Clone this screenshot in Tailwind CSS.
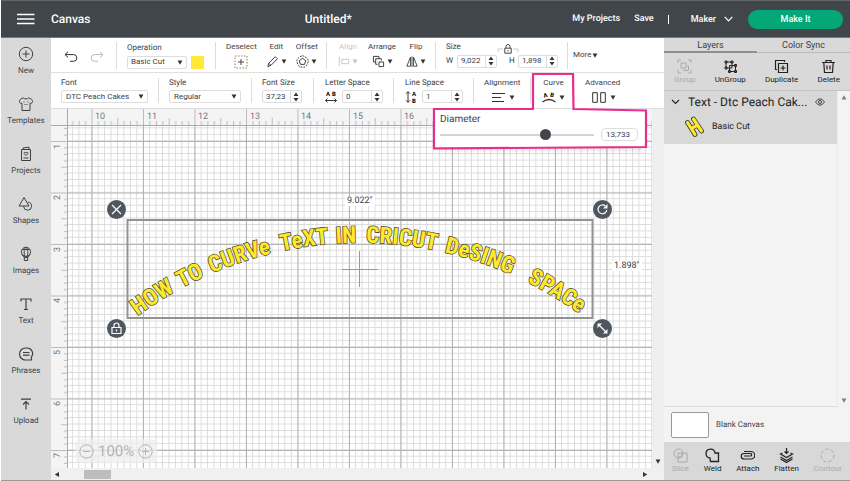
<!DOCTYPE html>
<html lang="en">
<head>
<meta charset="utf-8">
<title>Canvas</title>
<script src="https://cdn.jsdelivr.net/npm/@tailwindcss/browser@4"></script>
</head>
<body class="h-screen overflow-hidden bg-white pl-px text-[8px] leading-[10px] text-[#3c4146] [text-rendering:geometricPrecision] font-[Roboto,'Liberation_Sans',sans-serif]">
<svg class="hidden">
  <symbol id="down" viewBox="0 0 6 5"><path d="M.6.5h4.8L3 4.7z" fill="#333"/></symbol>
  <symbol id="step" viewBox="0 0 6 10"><path d="M.5 4 3 .5 5.500 4zM.5 6 3 9.500 5.500 6z" fill="#333"/></symbol>
</svg>
<div class="flex h-full flex-col border-b border-[#999]">
  <header class="flex h-[38px] shrink-0 items-center border-t border-b border-t-[#666] border-b-[#777] bg-[#41464b] text-[9px] font-medium text-white">
    <div class="flex w-[36%] items-center">
      <button aria-label="Menu" class="ml-4 h-4 w-[18px]"><svg viewBox="0 0 18 16" class="h-4 w-[18px]"><path d="M0 3.500h17.500M0 8h17.500M0 12.500h17.500" stroke="#fff" stroke-width="1.300"/></svg></button>
      <h1 class="ml-4 text-[12px] leading-4">Canvas</h1>
    </div>
    <h2 class="-ml-[2px] text-[12px] leading-4">Untitled*</h2>
    <div class="flex flex-1 items-center justify-end pr-[7px]">
      <a href="#">My Projects</a>
      <a href="#" class="ml-[14px]">Save</a>
      <span class="ml-[14px] h-[9px] w-px bg-white"></span>
      <button class="ml-[22px] flex items-center gap-2">Maker<svg viewBox="0 0 9 6" class="h-[6px] w-[9px]"><path d="M.7.800 4.500 4.800 8.300.8" fill="none" stroke="#fff" stroke-width="1.200"/></svg></button>
      <button class="ml-[15px] h-[19px] w-[95px] rounded-full bg-[#04a777]">Make It</button>
    </div>
  </header>

  <div class="flex min-h-0 flex-1">
    <nav class="flex w-[50px] shrink-0 flex-col bg-[#d9d9d9] pt-2 [&>a]:flex [&>a]:h-[50px] [&>a]:flex-col [&>a]:items-center [&>a]:gap-1 [&_svg]:h-4 [&_svg]:w-4 [&_svg]:fill-none [&_svg]:stroke-[#3c4146]">
      <a href="#"><svg viewBox="0 0 16 16"><circle cx="8" cy="8" r="6.700"/><path d="M8 4.500v7M4.500 8h7"/></svg>New</a>
      <a href="#"><svg viewBox="0 0 16 16"><path d="M5.500 2C6.500 3.300 9.500 3.300 10.500 2c2.500.4 4 1.600 4 3.500 0 1.500-1 2-2.500 1.800V14.500H4V7.300C2.500 7.500 1.500 7 1.500 5.500c0-1.900 1.500-3.100 4-3.500z"/><path d="M6 5.500v1M10 5.500v1M6.500 8.500h3" stroke-dasharray="1 1"/></svg>Templates</a>
      <a href="#"><svg viewBox="0 0 16 16"><path d="M3.500 3.500h9v11h-9zM5 3.500V2l6-.8v2.300M8 9.500 6 7.500c0-1.500 1.600-1.500 2-.5.4-1 2-1 2 .5zM5.500 12h5"/></svg>Projects</a>
      <a href="#"><svg viewBox="0 0 16 16"><path d="M6 1.500 11 10H1z"/><path d="M9.800 6.200a4 4 0 1 1-4.200 4"/></svg>Shapes</a>
      <a href="#"><svg viewBox="0 0 16 16"><circle cx="8" cy="5.800" r="4.600"/><path d="M6.300 11.500h3.400v3H6.300zM3.800 8l2.500 3.500M12.200 8 9.700 11.500M8 1.200C5.500 3.200 5.800 8 7.300 11.300M8 1.200C10.500 3.200 10.200 8 8.700 11.300M4.500 3.500h7"/></svg>Images</a>
      <a href="#"><svg viewBox="0 0 16 16"><path d="M3 5.500V3h10v2.500M8 3v10.500M6 13.500h4" stroke-width="1.200"/></svg>Text</a>
      <a href="#"><svg viewBox="0 0 16 16"><path d="M13.500 14H7.500A5.500 5.500 0 0 1 7.500 2h1.500a5.500 5.500 0 0 1 4.500 8.800zM5 6.500h6.500M5 9.200h6.500" stroke-width="1.200"/></svg>Phrases</a>
      <a href="#"><svg viewBox="0 0 16 16"><path d="M3 3.200h10M8 13.500v-8M5 8.500l3-3 3 3" stroke-width="1.200"/></svg>Upload</a>
    </nav>

    <main class="flex min-w-0 flex-1 flex-col">
      <div class="flex h-[35px] shrink-0 items-center border-b border-[#e0e0e0] [&>section]:flex [&>section]:h-[27px] [&>section]:shrink-0 [&>section]:border-r [&>section]:border-[#dcdcdc]">
        <section class="w-[66px] items-center gap-3 pt-1 pl-[13px]">
          <button aria-label="Undo"><svg viewBox="0 0 14 12" class="h-3 w-[14px]"><path d="M4 .8 1 3.600l3 2.800M1 3.600h8.500a3.300 3.300 0 0 1 0 6.700H6" fill="none" stroke="#333"/></svg></button>
          <button aria-label="Redo"><svg viewBox="0 0 14 12" class="h-3 w-[14px]"><path d="M10 .8l3 2.800-3 2.800M13 3.600H4.500a3.300 3.300 0 0 0 0 6.700H8" fill="none" stroke="#bbb"/></svg></button>
        </section>
        <section class="w-[99px] items-end gap-1 pl-[10px]">
          <div>
            <label for="op" class="block">Operation</label>
            <div class="relative mt-[3px] w-fit"><select id="op" class="block h-[13px] w-[60px] appearance-none rounded-xs border border-[#ddd] pl-[3px]"><option>Basic Cut</option></select><svg class="pointer-events-none absolute top-1 right-1 h-[5px] w-[6px]"><use href="#down"/></svg></div>
          </div>
          <button aria-label="Colour" class="h-[13px] w-[13px] bg-[#ffe836]"></button>
        </section>
        <section class="w-[111px] gap-[13px] pl-[10px] [&>button]:flex [&>button]:flex-col [&>button]:items-center [&>button]:gap-[3px]">
          <button>Deselect<svg viewBox="0 0 14 14" class="h-[14px] w-[14px]"><path d="M1 1h12v12H1z" fill="none" stroke="#a77b42" stroke-dasharray="1.500 1.500"/><path d="M7 4v6M4 7h6" stroke="#444"/></svg></button>
          <button class="-ml-1">Edit<span class="flex items-center gap-[2px]"><svg viewBox="0 0 14 14" class="h-[13px] w-[13px]"><path d="M2 12.500l1-3.800L10 1.800l2.300 2.300L5.500 11zM3 9l2.400 2.200" fill="none" stroke="#333"/></svg><svg class="h-[5px] w-[6px]"><use href="#down"/></svg></span></button>
          <button class="-ml-1">Offset<span class="flex items-center gap-[2px]"><svg viewBox="0 0 14 14" class="h-[13px] w-[13px]"><path d="M7 3.500l3.500 2.600-1.300 4H4.800l-1.300-4z" fill="none" stroke="#333"/><path d="M7 .8C9 1 13 4 13.200 6S11 12.500 9.500 13h-5C3 12.500.8 8 .8 6S5 1 7 .8z" fill="none" stroke="#333" stroke-dasharray="2 1.200"/></svg><svg class="h-[5px] w-[6px]"><use href="#down"/></svg></span></button>
        </section>
        <section class="w-[109px] gap-[10px] pl-[11px] [&>button]:flex [&>button]:flex-col [&>button]:items-center [&>button]:gap-[3px]">
          <button class="opacity-30" disabled>Align<span class="flex items-center gap-[2px]"><svg viewBox="0 0 14 14" class="h-[13px] w-[12px]"><path d="M1.500 1.500v11M4.500 4.500h8v5h-8z" fill="none" stroke="#333"/></svg><svg class="h-[5px] w-[6px]"><use href="#down"/></svg></span></button>
          <button>Arrange<span class="flex items-center gap-[2px]"><svg viewBox="0 0 14 14" class="h-[13px] w-[13px]"><path d="M4 7.500H1.500v-6h6V4M10 6V4H4v6h2M7.500 7.500h5v5h-5z" fill="none" stroke="#333"/></svg><svg class="h-[5px] w-[6px]"><use href="#down"/></svg></span></button>
          <button>Flip<span class="flex items-center gap-[2px]"><svg viewBox="0 0 14 14" class="h-[13px] w-[12px]"><path d="M5.200 2v10.500H1zM8.800 2v10.500H13zM7 1v12.500" fill="none" stroke="#333"/></svg><svg class="h-[5px] w-[6px]"><use href="#down"/></svg></span></button>
        </section>
        <section class="relative w-[132px] flex-col pl-[10px]">
          <span>Size</span>
          <div class="mt-[3px] flex items-center">
            <label for="w" class="w-[11px]">W</label>
            <span class="flex h-[13px] w-[40px] items-center rounded-xs border border-[#ddd] pr-[2px]"><input id="w" value="9,022" class="w-0 flex-1 pl-[3px] outline-none"><span class="mr-[2px] h-full w-px bg-[#ddd]"></span><svg class="h-[10px] w-[6px]"><use href="#step"/></svg></span>
            <label for="h" class="ml-3 w-[9px]">H</label>
            <span class="flex h-[13px] w-[40px] items-center rounded-xs border border-[#ddd] pr-[2px]"><input id="h" value="1,898" class="w-0 flex-1 pl-[3px] outline-none"><span class="mr-[2px] h-full w-px bg-[#ddd]"></span><svg class="h-[10px] w-[6px]"><use href="#step"/></svg></span>
          </div>
          <button aria-label="Lock proportions" class="absolute top-[2px] left-[61px]"><svg viewBox="0 0 22 10" class="h-[10px] w-[22px]"><path d="M1 8V5h5M21 8V5h-5" fill="none" stroke="#ccc"/><path d="M7.800 4.200h6.400v5H7.800zM9 4V2.500a2 2 0 0 1 4 0V4M11 6v1.500" fill="none" stroke="#444"/></svg></button>
        </section>
        <button class="flex items-center gap-px pl-[5px]">More<svg class="h-[5px] w-[6px]"><use href="#down"/></svg></button>
      </div>

      <div class="flex h-[36px] shrink-0 items-center border-b border-[#ddd] [&>section]:h-[25px] [&>section]:shrink-0 [&>section]:border-r [&>section]:border-[#dcdcdc]">
        <section class="w-[108px] pl-[10px]">
          <label for="font" class="block">Font</label>
          <div class="relative mt-[2px] w-fit"><select id="font" class="block h-[13px] w-[87px] appearance-none rounded-xs border border-[#ddd] pl-1"><option>DTC Peach Cakes</option></select><svg class="pointer-events-none absolute top-1 right-1 h-[5px] w-[6px]"><use href="#down"/></svg></div>
        </section>
        <section class="w-[93px] pl-[10px]">
          <label for="style" class="block">Style</label>
          <div class="relative mt-[2px] w-fit"><select id="style" class="block h-[13px] w-[72px] appearance-none rounded-xs border border-[#ddd] pl-1"><option>Regular</option></select><svg class="pointer-events-none absolute top-1 right-1 h-[5px] w-[6px]"><use href="#down"/></svg></div>
        </section>
        <section class="w-[62px] pl-[10px]">
          <label for="fs" class="block">Font Size</label>
          <span class="mt-[2px] flex h-[13px] w-[40px] items-center rounded-xs border border-[#ddd] pr-[2px]"><input id="fs" value="37,23" class="w-0 flex-1 pl-[3px] outline-none"><span class="mr-[2px] h-full w-px bg-[#ddd]"></span><svg class="h-[10px] w-[6px]"><use href="#step"/></svg></span>
        </section>
        <section class="w-[80px] pl-[11px]">
          <label for="ls" class="block">Letter Space</label>
          <div class="mt-[2px] flex items-center gap-[5px]">
            <svg viewBox="0 0 12 12" class="h-3 w-3 shrink-0"><path d="M.5 9.500h11M2.500 7.500l-2 2 2 2M9.500 7.500l2 2-2 2" fill="none" stroke="#333"/><text x="1" y="5" font-size="6" font-weight="700">A</text><text x="7" y="5" font-size="6" font-weight="700">B</text></svg>
            <span class="flex h-[13px] w-[41px] items-center rounded-xs border border-[#ddd] pr-[2px]"><input id="ls" value="0" class="w-0 flex-1 pl-[3px] outline-none"><span class="mr-[2px] h-full w-px bg-[#ddd]"></span><svg class="h-[10px] w-[6px]"><use href="#step"/></svg></span>
          </div>
        </section>
        <section class="w-[80px] pl-[11px]">
          <label for="lns" class="block">Line Space</label>
          <div class="mt-[2px] flex items-center gap-[5px]">
            <svg viewBox="0 0 12 12" class="h-3 w-3 shrink-0"><path d="M3 .7v10.600M1 2.700l2-2 2 2M1 9.300l2 2 2-2" fill="none" stroke="#333"/><text x="7" y="5" font-size="6" font-weight="700">A</text><text x="7" y="11.500" font-size="6" font-weight="700">B</text></svg>
            <span class="flex h-[13px] w-[41px] items-center rounded-xs border border-[#ddd] pr-[2px]"><input id="lns" value="1" class="w-0 flex-1 pl-[3px] outline-none"><span class="mr-[2px] h-full w-px bg-[#ddd]"></span><svg class="h-[10px] w-[6px]"><use href="#step"/></svg></span>
          </div>
        </section>
        <section class="w-[57px] pl-[10px]">
          <button class="flex flex-col gap-1">Alignment<span class="flex items-center gap-1 pl-2"><svg viewBox="0 0 13 11" class="h-[11px] w-[13px]"><path d="M0 1.500h13M0 5.500h9M0 9.500h12" stroke="#333" stroke-width="1.200"/></svg><svg class="h-[5px] w-[6px]"><use href="#down"/></svg></span></button>
        </section>
        <section class="relative w-[43px] pl-[11px]">
          <button class="relative z-20 flex flex-col gap-1">Curve<span class="flex items-center gap-[3px]"><svg viewBox="0 0 14 11" class="h-[11px] w-[14px]"><path d="M.5 10q6.500-5 13 0" fill="none" stroke="#333" stroke-width="1.300"/><text x="1.500" y="5.500" font-size="6" font-weight="700" transform="rotate(-15 3 4)">A</text><text x="8" y="5" font-size="6" font-weight="700" transform="rotate(15 10 4)">B</text></svg><svg class="h-[5px] w-[6px]"><use href="#down"/></svg></span></button>
          <div class="absolute top-[-6px] left-[-99px] z-10 h-[78px] w-[216px]">
            <div class="absolute top-[37px] right-[3px] bottom-[3px] left-[3px] bg-white px-[5px] pt-[3px] shadow-md">
              <label for="dia" class="block text-[10px] leading-4">Diameter</label>
              <div class="flex items-center gap-[7px]">
                <input id="dia" type="range" value="70" class="h-[13px] w-[154px] appearance-none bg-transparent bg-[linear-gradient(#d4d4d4,#d4d4d4)] bg-[length:100%_2px] bg-center bg-no-repeat [&::-webkit-slider-thumb]:h-[11px] [&::-webkit-slider-thumb]:w-[11px] [&::-webkit-slider-thumb]:appearance-none [&::-webkit-slider-thumb]:rounded-full [&::-webkit-slider-thumb]:bg-[#41464b]">
                <input aria-label="Diameter value" value="13,733" class="h-[13px] w-[37px] rounded-sm border border-[#ddd] pl-1">
              </div>
            </div>
            <svg viewBox="0 0 216 78" class="pointer-events-none absolute inset-0 h-full w-full"><path d="M101 2h40l.5 35L214 38.500V75L2 76.500V37h99z" fill="none" stroke="#ec2c8d" stroke-width="2.200"/></svg>
          </div>
        </section>
        <button class="ml-[11px] flex flex-col gap-1">Advanced<span class="flex items-center gap-1 pl-[7px]"><svg viewBox="0 0 14 11" class="h-[11px] w-[14px]"><path d="M.7.700h4.600v9.600H.7zM8.700.700h4.600v9.600H8.700z" fill="none" stroke="#333"/></svg><svg class="h-[5px] w-[6px]"><use href="#down"/></svg></span></button>
      </div>

      <div class="flex min-h-0 flex-1">
        <div class="relative min-w-0 flex-1 overflow-hidden bg-white">
          <svg class="absolute inset-0 h-full w-full">
            <defs>
              <pattern id="minor" x="67" y="125.400" width="6.4375" height="6.4375" patternUnits="userSpaceOnUse" patternTransform="translate(-.6 -3.500)"><path d="M6 0V6.4375M0 6H6.4375" stroke="#dadada" stroke-width=".9"/></pattern>
              <pattern id="major" x="91.500" y="141" width="51.500" height="51.500" patternUnits="userSpaceOnUse"><path d="M.5 0V51.500M0 .5H51.500" stroke="#b4b4b4"/></pattern>
              <pattern id="tickx" x="91.500" y="109" width="51.500" height="16" patternUnits="userSpaceOnUse"><path d="M.5 0V16M26.200 9V16M6.900 12V16M13.400 12V16M19.800 12V16M32.700 12V16M39.100 12V16M45.600 12V16" stroke="#b5b5b5" stroke-width=".9"/></pattern>
              <pattern id="ticky" x="51" y="141" width="16" height="51.500" patternUnits="userSpaceOnUse"><path d="M0 .5H16M10 26.200H16M13 6.900H16M13 13.400H16M13 19.800H16M13 32.700H16M13 39.100H16M13 45.600H16" stroke="#b5b5b5" stroke-width=".9"/></pattern>
              <path id="arc" d="M61 391.300A375 375 0 0 1 659 391.300"/>
            </defs>
            <g transform="translate(-51 -109)">
              <rect x="67" y="125" width="2000" height="2000" fill="url(#minor)"/>
              <rect x="67" y="125" width="2000" height="2000" fill="url(#major)"/>
              <rect x="51" y="109" width="2000" height="16" fill="#f4f4f4"/>
              <rect x="51" y="109" width="16" height="2000" fill="#f4f4f4"/>
              <rect x="67" y="109" width="2000" height="16" fill="url(#tickx)"/>
              <rect x="51" y="125" width="16" height="2000" fill="url(#ticky)"/>
              <path d="M67.500 109V2000M51 125.500H2000" stroke="#aaa"/>
              <g font-size="9" fill="#777">
                <text x="95" y="119">10</text><text x="147" y="119">11</text><text x="198" y="119">12</text><text x="250" y="119">13</text><text x="301" y="119">14</text><text x="353" y="119">15</text><text x="404" y="119">16</text>
                <text transform="translate(60 149)rotate(-90)">1</text><text transform="translate(60 200)rotate(-90)">2</text><text transform="translate(60 252)rotate(-90)">3</text><text transform="translate(60 303)rotate(-90)">4</text><text transform="translate(60 355)rotate(-90)">5</text><text transform="translate(60 406)rotate(-90)">6</text><text transform="translate(60 458)rotate(-90)">7</text>
              </g>
              <path d="M342 269.500h36M359.500 251v36" stroke="#999"/>
              <rect x="127.500" y="220" width="465" height="98" fill="none" stroke="#929492" stroke-width="2"/>
              <g font-family="'Liberation Sans Narrow','Roboto Condensed','Liberation Sans',sans-serif" font-size="23" font-weight="700" fill="#ffe92e" stroke="#4f4a28" stroke-width="1.500" paint-order="stroke">
                <text><textPath href="#arc" startOffset="108">HOW</textPath></text>
                <text><textPath href="#arc" startOffset="160">TO</textPath></text>
                <text><textPath href="#arc" startOffset="194">CURVe</textPath></text>
                <text><textPath href="#arc" startOffset="267">TeXT</textPath></text>
                <text><textPath href="#arc" startOffset="322">IN</textPath></text>
                <text><textPath href="#arc" startOffset="352">CRICUT</textPath></text>
                <text><textPath href="#arc" startOffset="431">DeSING</textPath></text>
                <text><textPath href="#arc" startOffset="519">SPACe</textPath></text>
              </g>
            </g>
          </svg>
          <span class="absolute top-[87px] left-[294px] bg-white px-[2px] text-[9px]">9.022"</span>
          <span class="absolute top-[152px] left-[561px] bg-white px-[2px] text-[9px]">1.898"</span>
          <button aria-label="Delete" class="absolute top-[91px] left-[56px] h-[19px] w-[19px] rounded-full bg-[#4e575f]"><svg viewBox="0 0 19 19"><path d="M5 5l9 9M14 5l-9 9" stroke="#fff" stroke-width="1.200"/></svg></button>
          <button aria-label="Rotate" class="absolute top-[91px] left-[542px] h-[19px] w-[19px] rounded-full bg-[#4e575f]"><svg viewBox="0 0 19 19"><path d="M13.800 10a4.400 4.400 0 1 1-1.500-4" fill="none" stroke="#fff" stroke-width="1.200"/><path d="M14.500 4v4.500H10z" fill="#fff"/></svg></button>
          <button aria-label="Lock" class="absolute top-[210px] left-[56px] h-[19px] w-[19px] rounded-full bg-[#4e575f]"><svg viewBox="0 0 19 19"><path d="M5 8.500h9v6H5zM7 8.500V6.500a2.500 2.500 0 0 1 5 0v2M9.500 10.500v2" fill="none" stroke="#fff" stroke-width="1.200"/></svg></button>
          <button aria-label="Resize" class="absolute top-[210px] left-[542px] h-[19px] w-[19px] rounded-full bg-[#4e575f]"><svg viewBox="0 0 19 19"><path d="M6 6l7 7" stroke="#fff" stroke-width="1.200"/><path d="M4.500 9V4.500H9zM14.500 10v4.500H10z" fill="#fff"/></svg></button>
          <div class="absolute bottom-[5px] left-6 flex h-6 items-center gap-1 rounded-md bg-[#eee]/70 px-1 text-[15px] text-[#b4b4b4]">
            <button aria-label="Zoom out"><svg viewBox="0 0 15 15" class="h-[15px] w-[15px]" fill="none" stroke="#b4b4b4"><circle cx="7.500" cy="7.500" r="6.700"/><path d="M4 7.500h7"/></svg></button>100%<button aria-label="Zoom in"><svg viewBox="0 0 15 15" class="h-[15px] w-[15px]" fill="none" stroke="#b4b4b4"><circle cx="7.500" cy="7.500" r="6.700"/><path d="M4 7.500h7M7.500 4v7"/></svg></button>
          </div>
        </div>
        <div class="flex w-3 shrink-0 items-end justify-center bg-[#efefef] pb-1"><svg class="h-[5px] w-[6px]"><use href="#down"/></svg></div>
      </div>
      <div class="flex h-3 shrink-0 items-center bg-[#f0f0f0] pr-4 pl-[3px]">
        <svg class="h-[5px] w-[6px] rotate-90"><use href="#down"/></svg>
        <span class="ml-6 h-[9px] w-[27px] bg-[#bdbdbd]"></span>
        <svg class="ml-auto h-[5px] w-[6px] -rotate-90"><use href="#down"/></svg>
      </div>
    </main>

    <aside class="flex w-[186px] shrink-0 flex-col bg-[#f3f3f3]">
      <div class="flex h-[15px] shrink-0 bg-[#d9d9d9] text-[9px]">
        <button class="flex-1 border-b-2 border-[#8b9095]">Layers</button>
        <button class="flex-1 border-b border-[#bbb]">Color Sync</button>
      </div>
      <div class="flex h-[38px] shrink-0 items-center justify-between border-b border-[#c4c4c4] bg-[#d9d9d9] px-[10px] text-[#222] [&_svg]:h-[15px] [&_svg]:w-[15px] [&_svg]:fill-none [&_svg]:stroke-current [&>button]:flex [&>button]:flex-col [&>button]:items-center [&>button]:gap-px">
        <button class="text-[#aaa]" disabled><svg viewBox="0 0 15 15"><path d="M1 4V1h3M11 1h3v3M14 11v3h-3M4 14H1v-3M4 4h5v5H4zM7 10v1.500h4.500V7H10"/></svg>Group</button>
        <button><svg viewBox="0 0 15 15"><path d="M3 3h6v6H3zM6.500 6.500h6v6h-6z"/><path d="M2 2h2v2H2zM8 2h2v2H8zM2 8h2v2H2zM11.500 5.500h2v2h-2zM5.500 11.500h2v2h-2zM11.500 11.500h2v2h-2z"/></svg>UnGroup</button>
        <button><svg viewBox="0 0 15 15" stroke-width="1.200"><path d="M4.500 4.500h9v9h-9zM3 10.500H1.500v-9h9V3M9 6.500v5M6.500 9h5"/></svg>Duplicate</button>
        <button><svg viewBox="0 0 15 15" stroke-width="1.200"><path d="M1 3.500h13M5 3.500v-2h5v2M2.800 3.500l.7 10h8l.7-10M6 6.500v4M9 6.500v4"/></svg>Delete</button>
      </div>
      <div class="flex min-h-0 flex-1">
        <div class="flex-1 border-b border-[#ddd]">
          <div class="h-[53px] bg-[#d8d8d8] pt-[3px]">
            <div class="flex items-center pr-3 pl-[7px] text-[12px] leading-4 whitespace-nowrap text-[#222]"><svg viewBox="0 0 9 6" class="mr-2 h-[6px] w-[9px]"><path d="M1 1l3.500 3.500L8 1" fill="none" stroke="#222" stroke-width="1.200"/></svg>Text - Dtc Peach Cak...<svg viewBox="0 0 10 8" class="ml-auto h-2 w-[10px]" fill="none" stroke="#333" stroke-width=".9"><path d="M.5 4Q5-2.500 9.500 4 5 10.500.5 4z"/><circle cx="5" cy="4" r="1.500"/></svg></div>
            <div class="mt-[6px] flex items-center gap-2 pl-5 text-[9px] text-[#222]"><svg viewBox="0 0 20 22" class="h-[22px] w-5"><g fill="none" stroke-linecap="round"><path d="M3.500 6.500 11 18.500M9.500 3 17.500 15M7.500 12.500 13.500 9" stroke="#333" stroke-width="4.800"/><path d="M3.500 6.500 11 18.500M9.500 3 17.500 15M7.500 12.500 13.500 9" stroke="#ffe92e" stroke-width="3.200"/></g></svg>Basic Cut</div>
          </div>
        </div>
        <div class="flex w-[13px] flex-col items-center justify-between border-l border-[#e6e6e6] py-1 opacity-60"><svg class="h-[5px] w-[6px] rotate-180"><use href="#down"/></svg><svg class="h-[5px] w-[6px]"><use href="#down"/></svg></div>
      </div>
      <div class="flex h-[35px] shrink-0 items-center gap-[7px] pl-[7px]"><span class="h-[26px] w-[38px] rounded-xs border border-[#999] bg-white"></span>Blank Canvas</div>
      <div class="flex h-[38px] shrink-0 items-center justify-between bg-[#d8d8d8] px-2 text-[#222] [&_svg]:h-[15px] [&_svg]:w-[15px] [&_svg]:fill-none [&_svg]:stroke-current [&>button]:flex [&>button]:flex-col [&>button]:items-center [&>button]:gap-px">
        <button class="text-[#aaa]" disabled><svg viewBox="0 0 15 15"><circle cx="5.500" cy="5.500" r="4.500"/><path d="M9 5h5v9H5V9M5 5h4v4H5z"/></svg>Slice</button>
        <button><svg viewBox="0 0 15 15" stroke-width="1.300"><path d="M5 10A4.500 4.500 0 1 1 10 5h3.500v8.500H5.500z"/></svg>Weld</button>
        <button><svg viewBox="0 0 15 15" stroke-width="1.200"><path d="M4 8h7a1.500 1.500 0 0 0 0-2.500H4a2.500 2.500 0 0 0 0 5.500h7a3.700 3.700 0 0 0 0-7.500H4"/></svg>Attach</button>
        <button><svg viewBox="0 0 15 15" stroke-width="1.200"><path d="M7.500 0v5M5.500 3.500l2 2 2-2M3.500 5 1.500 6l6 3.500 6-3.500-2-1M1.500 9l6 3.500 6-3.500M1.500 11l6 3.500 6-3.500"/></svg>Flatten</button>
        <button class="text-[#aaa]" disabled><svg viewBox="0 0 15 15"><circle cx="7.500" cy="7.500" r="6.500" stroke-dasharray="3.500 2"/></svg>Contour</button>
      </div>
    </aside>
  </div>
</div>
</body>
</html>
